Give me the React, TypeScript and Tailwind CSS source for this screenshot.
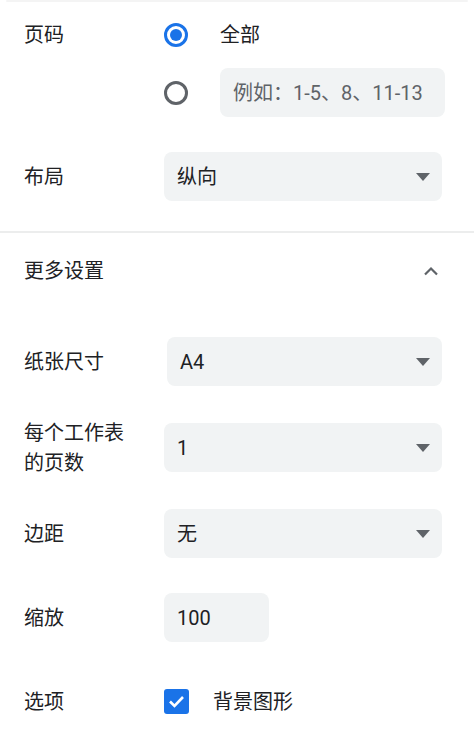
import React from 'react';

const font = { fontFamily: 'Roboto, "Noto Sans CJK SC", sans-serif' };

function Caret() {
  return (
    <svg width="14" height="8" viewBox="0 0 14 8" className="shrink-0">
      <path d="M0 0h14L7 8z" fill="#5f6368" />
    </svg>
  );
}

function Select({ value, className = '' }: { value: string; className?: string }) {
  return (
    <div
      className={`h-[49px] flex-1 rounded-lg bg-[#f1f3f4] flex items-center justify-between pl-[13px] pr-[12px] text-[20px] text-[#202124] ${className}`}
    >
      <span>{value}</span>
      <Caret />
    </div>
  );
}

// label column keeps the row at the control's height, even for two-line labels
function Row({ label, children, className = '' }: { label: React.ReactNode; children: React.ReactNode; className?: string }) {
  return (
    <div className={`flex items-center h-[49px] ${className}`}>
      <div className="w-[140px] h-[49px] shrink-0 flex items-center text-[20px] leading-[30px] text-[#202124] pr-[20px]">
        <div>{label}</div>
      </div>
      <div className="flex-1 flex items-center">{children}</div>
    </div>
  );
}

export default function App() {
  return (
    <div className="w-[474px] h-[735px] bg-white overflow-hidden" style={font}>
      <div className="h-[2px] mx-[6px] bg-[#f4f4f4] rounded-full" />

      {/* 基本设置 */}
      <section className="pl-[24px] pr-[32px] pt-[8px] pb-[30px]">
        <Row label="页码">
          <div className="flex items-center h-[49px]">
            <span className="w-[24px] h-[24px] rounded-full border-[3px] border-[#1a73e8] flex items-center justify-center">
              <span className="w-[12px] h-[12px] rounded-full bg-[#1a73e8]" />
            </span>
            <span className="ml-[32px] text-[20px] text-[#202124]">全部</span>
          </div>
        </Row>
        <div className="flex items-center mt-[9px] pl-[140px]">
          <span className="w-[24px] h-[24px] rounded-full border-[3px] border-[#5f6368] shrink-0" />
          <div className="ml-[32px] h-[49px] flex-1 -mr-[3px] rounded-lg bg-[#f1f3f4] flex items-center pl-[13px] text-[20px] text-[#5f6368]">
            例如：1-5、8、11-13
          </div>
        </div>
        <div className="mt-[35px]">
          <Row label="布局">
            <Select value="纵向" />
          </Row>
        </div>
      </section>

      <div className="h-[2px] bg-[#eceded]" />

      {/* 更多设置 */}
      <section className="pl-[24px] pr-[32px] pt-[14px]">
        <div className="h-[48px] flex items-center justify-between">
          <span className="text-[20px] text-[#202124]">更多设置</span>
          <svg width="16" height="10" viewBox="0 0 16 10" className="mr-[3px]">
            <path d="M2 8.5L8 2.5l6 6" fill="none" stroke="#5f6368" strokeWidth="2.2" />
          </svg>
        </div>

        <div className="mt-[42px] flex flex-col">
          <Row label="纸张尺寸">
            <Select value="A4" className="ml-[3px]" />
          </Row>
          <Row
            className="mt-[37px]"
            label={
              <>
                每个工作表
                <br />
                的页数
              </>
            }
          >
            <Select value="1" />
          </Row>
          <Row label="边距" className="mt-[37px]">
            <Select value="无" />
          </Row>
          <Row label="缩放" className="mt-[35px]">
            <div className="w-[105px] h-[49px] rounded-lg bg-[#f1f3f4] flex items-center pl-[13px] text-[20px] text-[#202124]">
              100
            </div>
          </Row>
          <Row label="选项" className="mt-[35px]">
            <div className="flex items-center">
              <span className="w-[25px] h-[25px] rounded-[3px] bg-[#1a73e8] flex items-center justify-center">
                <svg width="17" height="13" viewBox="0 0 17 13">
                  <path d="M2 6.5l4.5 4.5L15 2" fill="none" stroke="#fff" strokeWidth="2.6" />
                </svg>
              </span>
              <span className="ml-[24px] text-[20px] text-[#202124]">背景图形</span>
            </div>
          </Row>
        </div>
      </section>
    </div>
  );
}
